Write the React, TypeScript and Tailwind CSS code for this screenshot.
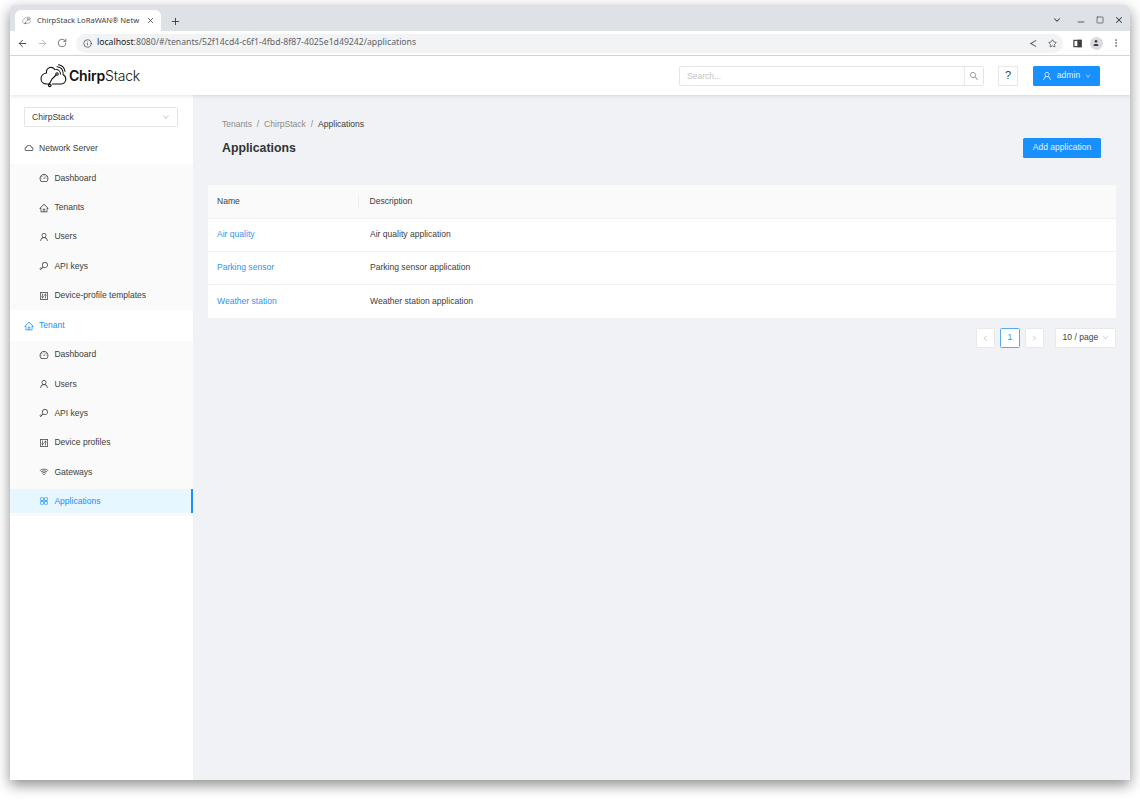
import React from "react";
import {
  AiOutlineCloud, AiOutlineDashboard, AiOutlineHome, AiOutlineUser, AiOutlineKey,
  AiOutlineControl, AiOutlineWifi, AiOutlineAppstore, AiOutlineSearch, AiOutlineDown,
  AiOutlineLeft, AiOutlineRight,
} from "react-icons/ai";
import { ArrowLeft, ArrowRight, RotateCw, Info, Star, X, Plus, ChevronDown, Minus, Square, MoreVertical, User } from "lucide-react";

const Logo = ({ className }: { className: string }) => (
  <svg viewBox="0 0 27 24" fill="none" stroke="currentColor" strokeWidth="1.1" strokeLinecap="round" className={className}>
    <path d="M15 5.6C13.6 3.6 11.5 3 9.8 3.6 7.4 4.4 6.2 6.6 6.5 9 3.4 9.4 1 11.8 1 14.8c0 3.2 2.6 5.2 5.6 5.2H9.5" />
    <path d="M12.5 20h8.2c2.9 0 5.1-2.2 5.1-5 0-2.2-1.2-3.8-2.9-4.6" />
    <path d="M8.5 21.5 12 15l4-4" />
    <circle cx="9.8" cy="21.3" r="1.3" />
    <circle cx="17" cy="10" r="1.2" />
    <path d="M16 5.5c2.5 0 4.5 2 4.5 4.5" />
    <path d="M17 2.8c3.5.3 6 3 6.2 6.5" />
    <path d="M18.5 0.8c3.5.5 6 3 6.5 6.5" />
  </svg>
);

const Item = ({ icon, label, active }: { icon: React.ReactNode; label: string; active?: boolean }) => (
  <div className={`flex h-[24.4px] items-center pl-[29px] gap-[5.4px] mb-[4.93px] last:mb-0 ${active ? "bg-[#e6f7ff] text-[#1890ff] border-r-2 border-[#1890ff]" : ""}`}>
    <span className="text-[10px] flex w-[10px] justify-center">{icon}</span>
    <span>{label}</span>
  </div>
);

const Group = ({ icon, label, active }: { icon: React.ReactNode; label: string; active?: boolean }) => (
  <div className={`flex h-[24.4px] items-center pl-[14px] gap-[5px] ${active ? "text-[#1890ff]" : ""}`}>
    <span className="text-[10px] flex w-[10px] justify-center">{icon}</span>
    <span>{label}</span>
  </div>
);

const rows = [
  ["Air quality", "Air quality application"],
  ["Parking sensor", "Parking sensor application"],
  ["Weather station", "Weather station application"],
];

export default function App() {
  return (
    <div className="w-[1140px] h-[800px] bg-white pl-[10px] pt-[5px] overflow-hidden font-['Liberation_Sans',sans-serif] text-[8.55px] text-[#3d3d3d]">
      <div className="w-[1120px] h-[775px] flex flex-col rounded-t-[5px] overflow-hidden shadow-[0_5px_14px_rgba(0,0,0,0.45)] bg-white">
        {/* tab strip */}
        <div className="h-[26px] shrink-0 bg-[#dee1e6] flex items-end pl-[5px] pr-[5px] font-['Noto_Sans',sans-serif]">
          <div className="w-[146px] h-[21px] bg-white rounded-t-[6px] flex items-center pl-[7px] pr-[6px] text-[7.6px] text-[#3c4043]">
            <Logo className="w-[9px] h-[9px] mr-[6px] shrink-0" />
            <span className="w-[107px] shrink-0 overflow-hidden whitespace-nowrap">ChirpStack LoRaWAN® Netw</span>
            <X size={9} strokeWidth={2} className="ml-auto shrink-0" />
          </div>
          <Plus size={11} strokeWidth={2} className="ml-[9px] mb-[4px] text-[#3c4043]" />
          <div className="ml-auto flex items-center gap-[10px] self-start mt-[8px] mr-[1px] text-[#3c4043]">
            <ChevronDown size={10} strokeWidth={2.5} />
            <Minus size={10} strokeWidth={2} className="ml-[4px] mt-[4px]" />
            <Square size={8} strokeWidth={2} />
            <X size={10} strokeWidth={2.5} />
          </div>
        </div>
        {/* toolbar */}
        <div className="h-[25px] shrink-0 bg-white border-b border-[#dadce0] flex items-center pl-[7px] pr-[9px] text-[#5f6368] font-['Noto_Sans',sans-serif]">
          <ArrowLeft size={11} strokeWidth={2} className="text-[#3c4043]" />
          <ArrowRight size={11} strokeWidth={2} className="ml-[9px] text-[#b5b8bc]" />
          <RotateCw size={10} strokeWidth={2} className="ml-[9px]" />
          <div className="ml-[9px] w-[988px] h-[19px] bg-[#f1f3f4] rounded-full flex items-center pl-[7px] pr-[6px] text-[8.68px]">
            <Info size={9} strokeWidth={1.8} className="mr-[5px] shrink-0 text-[#3c4043]" />
            <span className="text-[#202124]">localhost</span>
            <span>:8080/#/tenants/52f14cd4-c6f1-4fbd-8f87-4025e1d49242/applications</span>
            <svg viewBox="0 0 10 10" className="ml-auto w-[9px] h-[9px]" fill="none" stroke="currentColor" strokeWidth="1.2"><path d="M8 1.5 2 5l6 3.5" /></svg>
            <Star size={9} strokeWidth={1.8} className="ml-[10px] text-[#3c4043]" />
          </div>
          <svg viewBox="0 0 10 10" className="ml-[10px] w-[9px] h-[9px] text-[#3c4043]" fill="none" stroke="currentColor" strokeWidth="1.3"><rect x="1" y="1.5" width="8" height="7" /><rect x="5.5" y="1.5" width="3.5" height="7" fill="currentColor" /></svg>
          <span className="ml-[8px] w-[13px] h-[13px] rounded-full bg-[#dadce0] flex items-center justify-center"><User size={8} strokeWidth={0} fill="#3c4043" /></span>
          <MoreVertical size={10} strokeWidth={2} className="ml-[8px]" />
        </div>
        {/* app header */}
        <div className="relative z-10 h-[39px] shrink-0 bg-white shadow-[0_1px_4px_rgba(0,21,41,0.12)] flex items-center pr-[30px]">
          <div className="flex items-center pl-[30px] text-[#111]">
            <Logo className="w-[27px] h-[24px]" />
            <span className="ml-[2px] font-['Inter',sans-serif] text-[14px] tracking-[-0.2px]"><span className="font-semibold">Chirp</span><span className="font-light">Stack</span></span>
          </div>
          <div className="ml-auto flex w-[305px] h-[20px] bg-white border border-[#e4e4e4] rounded-[1.5px]">
            <span className="flex-1 pl-[7px] leading-[18px] text-[#c4c4c4]">Search...</span>
            <span className="w-[19px] border-l border-[#e8e8e8] flex items-center justify-center text-[#00000073] text-[10px]"><AiOutlineSearch /></span>
          </div>
          <div className="ml-[14px] w-[20px] h-[20px] border border-[#e8e8e8] flex items-center justify-center text-[11px]">?</div>
          <div className="ml-[15px] w-[67px] h-[20px] bg-[#1890ff] rounded-[1.5px] text-[#e3f1ff] flex items-center justify-center gap-[4.5px]">
            <AiOutlineUser className="text-[10px]" />
            <span>admin</span>
            <AiOutlineDown className="text-[6px]" />
          </div>
        </div>
        <div className="flex flex-1 min-h-0">
          {/* sidebar */}
          <div className="w-[183px] shrink-0 bg-white pt-[12px]">
            <div className="ml-[14px] w-[154px] h-[20px] border border-[#e4e4e4] rounded-[1.5px] flex items-center pl-[7px] pr-[7px] mb-[8.8px]">
              <span>ChirpStack</span>
              <AiOutlineDown className="ml-auto text-[8px] text-[#00000040]" />
            </div>
            <Group icon={<AiOutlineCloud />} label="Network Server" />
            <div className="bg-[#fafafa] pt-[2.1px] pb-[2.45px] mt-[3.8px]">
              <Item icon={<AiOutlineDashboard />} label="Dashboard" />
              <Item icon={<AiOutlineHome />} label="Tenants" />
              <Item icon={<AiOutlineUser />} label="Users" />
              <Item icon={<AiOutlineKey />} label="API keys" />
              <Item icon={<AiOutlineControl />} label="Device-profile templates" />
            </div>
            <div className="mt-[3.2px]"><Group icon={<AiOutlineHome />} label="Tenant" active /></div>
            <div className="bg-[#fafafa] pt-[2px] pb-[2.45px] mt-[2.8px]">
              <Item icon={<AiOutlineDashboard />} label="Dashboard" />
              <Item icon={<AiOutlineUser />} label="Users" />
              <Item icon={<AiOutlineKey />} label="API keys" />
              <Item icon={<AiOutlineControl />} label="Device profiles" />
              <Item icon={<AiOutlineWifi />} label="Gateways" />
              <Item icon={<AiOutlineAppstore />} label="Applications" active />
            </div>
          </div>
          {/* content */}
          <div className="flex-1 bg-[#f0f2f5] pl-[15px] pr-[14px]">
            <div className="flex items-start pl-[14px] pr-[15px] pt-[22px] h-[90px]">
              <div>
                <div className="text-[#8c8c8c] h-[14px] leading-[14px]">
                  Tenants<span className="mx-[4.9px]">/</span>ChirpStack<span className="mx-[4.9px]">/</span><span className="text-[#3d3d3d]">Applications</span>
                </div>
                <div className="mt-[8px] text-[12.3px] font-bold leading-[18px] text-[#333]">Applications</div>
              </div>
              <div className="ml-auto mt-[21px] w-[78px] h-[19.5px] bg-[#1890ff] rounded-[1.5px] text-[#e3f1ff] flex items-center justify-center">Add application</div>
            </div>
            <div className="bg-white">
              <div className="flex h-[33.5px] items-center bg-[#fafafa] border-b border-[#f0f0f0]">
                <div className="w-[151px] pl-[9px] h-[14px] leading-[14px] border-r border-[#f0f0f0]">Name</div>
                <div className="pl-[10.5px]">Description</div>
              </div>
              {rows.map(([name, desc]) => (
                <div key={name} className="flex h-[33.2px] items-center border-b border-[#f0f0f0] last:border-b-0">
                  <div className="w-[151px] pl-[9px] text-[#2f95f5]">{name}</div>
                  <div className="pl-[11px]">{desc}</div>
                </div>
              ))}
            </div>
            <div className="flex justify-end mt-[10px]">
              <div className="w-[19.5px] h-[19.5px] bg-white border border-[#e8e8e8] rounded-[1.5px] flex items-center justify-center text-[#00000040] text-[6.5px]"><AiOutlineLeft /></div>
              <div className="ml-[4.9px] w-[19.5px] h-[19.5px] bg-white border border-[#5aa9f0] rounded-[1.5px] flex items-center justify-center text-[#2f95f5]">1</div>
              <div className="ml-[4.9px] w-[19.5px] h-[19.5px] bg-white border border-[#e8e8e8] rounded-[1.5px] flex items-center justify-center text-[#00000040] text-[6.5px]"><AiOutlineRight /></div>
              <div className="ml-[10.5px] w-[61.5px] h-[19.5px] bg-white border border-[#e8e8e8] rounded-[1.5px] flex items-center pl-[7px]">
                <span>10 / page</span>
                <AiOutlineDown className="ml-[4px] text-[7px] text-[#00000040]" />
              </div>
            </div>
          </div>
        </div>
      </div>
    </div>
  );
}
